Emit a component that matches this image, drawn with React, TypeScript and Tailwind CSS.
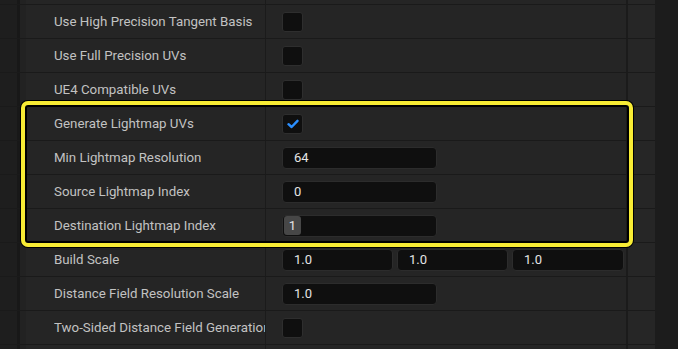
import React from 'react';

type Row = {
  label: string;
  kind: 'check' | 'input' | 'vec3';
  value?: string;
  checked?: boolean;
  cursor?: boolean;
  inputWidth?: string;
};

const Checkbox: React.FC<{ checked?: boolean }> = ({ checked }) => (
  <div className="w-[21px] h-[20px] rounded-[3px] bg-[#0f0f0f] border border-[#2e2e2e] flex items-center justify-center">
    {checked && (
      <svg width="12" height="10" viewBox="0 0 12 10">
        <path d="M1.5 5.2 L4.6 8 L10.5 1.8" fill="none" stroke="#2b8fff" strokeWidth="2.4" strokeLinecap="round" strokeLinejoin="round" />
      </svg>
    )}
  </div>
);

const NumInput: React.FC<{ value: string; width: string; cursor?: boolean }> = ({ value, width, cursor }) => (
  <div className={`${width} h-[22px] rounded-[4px] bg-[#0f0f0f] border border-[#2c2c2c] flex items-center text-[13px] text-[#e4e4e4]`}>
    {cursor ? (
      <span className="ml-[1px] h-[19px] w-[17px] rounded-[3px] bg-[#474747] flex items-center justify-center">{value}</span>
    ) : (
      <span className="pl-[11px]">{value}</span>
    )}
  </div>
);

const PropRow: React.FC<{ row: Row }> = ({ row }) => (
  <div className="h-[34px] shrink-0 flex border-b border-[#1a1a1a] bg-[#252525]">
    <div className="w-[17px] bg-[#1e1e1e]" />
    <div className="w-[3px] bg-[#181818]" />
    <div className="w-[6px] bg-[#222222]" />
    <div className="w-[240px] border-r border-[#1b1b1b] pl-[28px] flex items-center">
      <span className="w-[211px] overflow-hidden whitespace-nowrap text-[13.3px] text-[#c2c2c2]">{row.label}</span>
    </div>
    <div className="w-[360px] pl-[16px] flex items-center gap-[4px]">
      {row.kind === 'check' && <Checkbox checked={row.checked} />}
      {row.kind === 'input' && <NumInput value={row.value ?? ''} width={row.inputWidth ?? 'w-[155px]'} cursor={row.cursor} />}
      {row.kind === 'vec3' && (
        <>
          <NumInput value="1.0" width="w-[111px]" />
          <NumInput value="1.0" width="w-[111px]" />
          <NumInput value="1.0" width="w-[112px]" />
        </>
      )}
    </div>
    <div className="w-[2px] bg-[#1b1b1b]" />
    <div className="w-[27px] bg-[#262626]" />
  </div>
);

const before: Row[] = [
  { label: '', kind: 'check' },
  { label: 'Use High Precision Tangent Basis', kind: 'check' },
  { label: 'Use Full Precision UVs', kind: 'check' },
  { label: 'UE4 Compatible UVs', kind: 'check' },
];

const highlighted: Row[] = [
  { label: 'Generate Lightmap UVs', kind: 'check', checked: true },
  { label: 'Min Lightmap Resolution', kind: 'input', value: '64' },
  { label: 'Source Lightmap Index', kind: 'input', value: '0' },
  { label: 'Destination Lightmap Index', kind: 'input', value: '1', cursor: true },
];

const after: Row[] = [
  { label: 'Build Scale', kind: 'vec3' },
  { label: 'Distance Field Resolution Scale', kind: 'input', value: '1.0' },
  { label: 'Two-Sided Distance Field Generation', kind: 'check' },
  { label: '', kind: 'input', value: '', inputWidth: 'w-[80px]' },
];

export default function App() {
  return (
    <div className="w-[678px] h-[349px] overflow-hidden flex bg-[#1c1c1c] font-['Roboto',sans-serif]">
      <div className="w-[655px] flex flex-col -mt-[29px]">
        {before.map((r, i) => (
          <PropRow key={`b${i}`} row={r} />
        ))}
        <div className="relative shrink-0">
          {highlighted.map((r, i) => (
            <PropRow key={`h${i}`} row={r} />
          ))}
          <div className="absolute left-[21px] top-[-6px] w-[612px] h-[146px] rounded-[7px] border-[4px] border-[#f8ec34] shadow-[0_0_0_1px_#000,inset_0_0_0_2px_#000] pointer-events-none" />
        </div>
        {after.map((r, i) => (
          <PropRow key={`a${i}`} row={r} />
        ))}
      </div>
      <div className="w-[23px] bg-[#1c1c1c]" />
    </div>
  );
}
